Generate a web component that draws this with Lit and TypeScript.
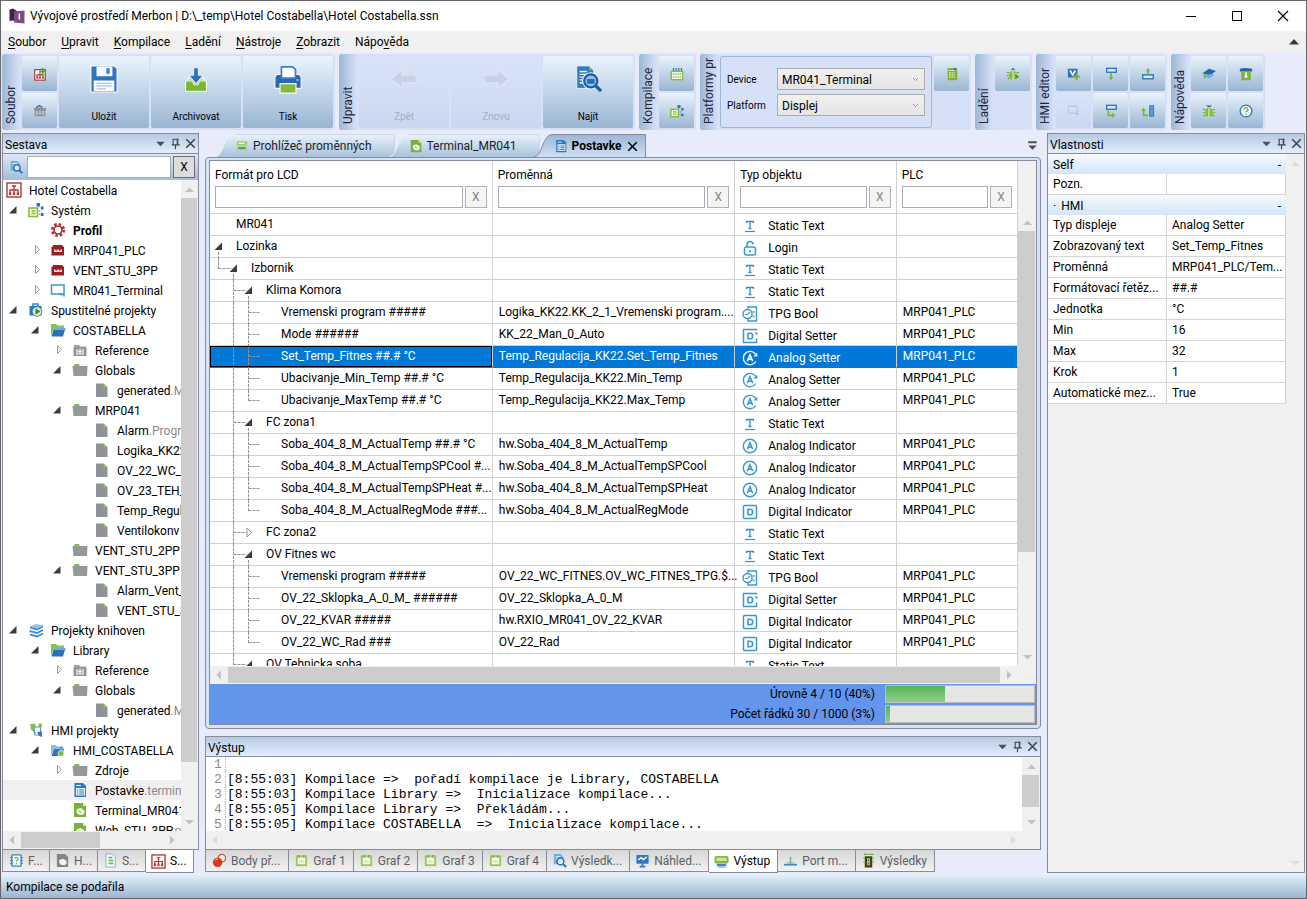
import { LitElement, html, css, svg, nothing } from "lit";
import type { TemplateResult } from "lit";
import { customElement, state } from "lit/decorators.js";
import { classMap } from "lit/directives/class-map.js";

const SHAPES: Record<string, TemplateResult> = {
  logo: svg`<path d="M0.500 1.500 4 0.500 8 3 8 14 4 12.500 0.500 13z" fill="#4b1d49"/><path d="M5 3.500 15.500 2.500V15.500L5 14.500z" fill="#7d4a83"/><path d="M9.500 5.500h1.600v6h-1.600z" fill="#fff"/>`,
  project: svg`<rect x="1" y="1" width="14" height="14" fill="#fff" stroke="#b3332f" stroke-width="1.400"/><path d="M8 4v4M4 11V8h8v3M8 8v3M6 4h4" fill="none" stroke="#b3332f" stroke-width="1.300"/><path d="M3 10.500h2.200V13H3zM6.900 10.500h2.200V13H6.900zM10.800 10.500H13V13h-2.200z" fill="#b3332f"/>`,
  projectNew: svg`<rect x="2" y="3" width="12" height="12" fill="#fff" stroke="#b3332f" stroke-width="1.300"/><path d="M4.500 12V9h7v3M8 9v3M8 9V6" fill="none" stroke="#b3332f" stroke-width="1.300"/><path d="M4 11h2v2.300H4zM7 11h2v2.300H7zM10.300 11h2v2.300h-2z" fill="#b3332f"/><path d="M11 1v8M7 5h8" stroke="#4ba52e" stroke-width="2"/>`,
  basket: svg`<path d="M3.500 4.500 7 2l4 2" fill="none" stroke="#3b87c8" stroke-width="2"/><path d="M1 4.500h14v3h-1V14H2V7.500H1z" fill="#8f9399"/><path d="M4.500 8v4M8 8v4M11.500 8v4" stroke="#e4ebf2" stroke-width="1.200"/>`,
  save: svg`<path d="M3 2h24l3 3v25H2V3z" fill="#2f74bd" stroke="#f4f8fc" stroke-width="1.300"/><path d="M8 2.600h17V13H8z" fill="#f7fafd"/><path d="M18.500 4.500h3.600v6h-3.600z" fill="#3b80c5"/><path d="M5 17.500h22v11.500H5z" fill="#fafcfe"/><path d="M8 20.500h16M8 23.500h16M8 26.500h10" stroke="#9aaec2" stroke-width="1"/>`,
  archive: svg`<path d="M5 19 9 14h14l4 5v10H5z" fill="#c9e1ae" stroke="#f4faee" stroke-width="1.400"/><path d="M5.500 19h6l2 4h5l2-4h6v9.500h-21z" fill="#7ab535"/><path d="M13.500 4h5v8h5L16 21 8.500 12h5z" fill="#2f72bb" stroke="#eef6fc" stroke-width="1"/>`,
  print: svg`<path d="M4 11h24l2 3v12H2V14z" fill="#2a67b1" stroke="#f0f6fb" stroke-width="1.300"/><path d="M9 3h12l3 3v9H9z" fill="#fff" stroke="#3b81c4" stroke-width="1.800"/><path d="M7.500 21h17v10h-17z" fill="#86b93c" stroke="#f2f8ec" stroke-width="1.300"/><path d="M25 17h2" stroke="#cfe2f2" stroke-width="1.500"/>`,
  undo: svg`<path d="M2 16 14 6v5.500h15v9H14V26z" fill="#c8d1e6" stroke="#dfe6f5" stroke-width="1.300"/>`,
  redo: svg`<path d="M30 16 18 6v5.500H3v9h15V26z" fill="#c8d1e6" stroke="#dfe6f5" stroke-width="1.300"/>`,
  find: svg`<path d="M4 2h13l5 5v19H4z" fill="#2f7bc0" stroke="#eaf4fb" stroke-width="1"/><path d="M17 2l5 5h-5z" fill="#7db936"/><path d="M7 8h8M7 11h11M7 14h6M7 17h5M7 20h5" stroke="#e7f2fa" stroke-width="1.400"/><circle cx="19" cy="18" r="7" fill="#a9d3ee" stroke="#eaf4fb" stroke-width="4.500"/><circle cx="19" cy="18" r="7" fill="#8fc4e6" stroke="#1f5ca8" stroke-width="2.500"/><path d="M24 23l6 6" stroke="#1f5ca8" stroke-width="3.500"/><path d="M15 16h8v5h-8z" fill="#2b6cb3"/>`,
  findSmall: svg`<path d="M2 1h7l3 3v8H2z" fill="#6fb0de"/><path d="M4 4h5M4 6.500h3" stroke="#fff"/><circle cx="9" cy="9" r="3.600" fill="#d7ebf8" stroke="#2b72b8" stroke-width="1.600"/><path d="M12 12l3 3" stroke="#2b72b8" stroke-width="2.200"/>`,
  calendar: svg`<path d="M4 1v4M7 1v4M10 1v4M13 1v4" stroke="#2b6db5" stroke-width="1.300"/><rect x="1.500" y="5" width="13" height="9.500" fill="#f5fbe9" stroke="#8abb35" stroke-width="1.500"/><path d="M3.500 8h9M3.500 11.500h9" stroke="#8abb35" stroke-width="1.700" stroke-dasharray="1.500 1"/>`,
  system: svg`<rect x="1" y="6" width="8.500" height="8.500" fill="#f3fae5" stroke="#86b832" stroke-width="1.500"/><path d="M3.500 9h4M3.500 11.500h4" stroke="#86b832" stroke-width="1.300"/><path d="M9.500 6.500l2-2M11 9h2.500M11 12l2.500.5" stroke="#2d74bb" stroke-width="1" stroke-dasharray="1 1"/><path d="M8.500 1h3.500v3.500H8.500zM12.800 4.500h2.700v3h-2.700zM12.800 11h2.700v3h-2.700z" fill="#2d74bb"/>`,
  device: svg`<path d="M3 1h9l2 2v12H3z" fill="#7fb431"/><path d="M4.500 4h7M4.500 6.500h7M4.500 9h7M4.500 11.500h7" stroke="#eef6dd" stroke-width="1.200" stroke-dasharray="2 1"/><path d="M10 1h3v2.500h-3z" fill="#2d74bb"/>`,
  bug: svg`<path d="M1 6l3 1M15 6l-3 1M1 10h3M15 10h-3M2 14l3-2M14 14l-3-2" stroke="#6faa2d" stroke-width="1.400"/><ellipse cx="8" cy="9.500" rx="4.200" ry="5.500" fill="#84bb34"/><path d="M8 4v11" stroke="#e6f4ce" stroke-width="1.200"/><path d="M6 3.500a2 2 0 0 1 4 0z" fill="#2b6db5"/><path d="M5.500 1l1.500 2M10.500 1 9 3" stroke="#2b6db5"/>`,
  bugRun: svg`<path d="M1 6l3 1M15 6l-3 1M1 10h3M2 14l3-2" stroke="#6faa2d" stroke-width="1.400"/><ellipse cx="8" cy="9.500" rx="4.200" ry="5.500" fill="#84bb34"/><path d="M8 4v11" stroke="#e6f4ce" stroke-width="1.200"/><path d="M10 7l6 4-6 4z" fill="#4b9a24" stroke="#e6f4ce" stroke-width="0.600"/><path d="M6 3.500a2 2 0 0 1 4 0z" fill="#2b6db5"/>`,
  vNew: svg`<path d="M1 2h11v10H1z" fill="#2b72b9"/><path d="M3.500 4l3 5 3-5" fill="none" stroke="#fff" stroke-width="1.800"/><path d="M11 7v8M7 11h8" stroke="#7fb431" stroke-width="2.200"/>`,
  dockDown: svg`<rect x="3" y="1.500" width="11" height="4.500" fill="#d9e9f6" stroke="#2b72b9" stroke-width="1.500"/><path d="M8 7v7" stroke="#7fb431" stroke-width="2"/><path d="M5.500 11h5L8 15z" fill="#7fb431"/>`,
  dockUp: svg`<rect x="2" y="9" width="12" height="4.500" fill="#d9e9f6" stroke="#2b72b9" stroke-width="1.500"/><path d="M8 8V2" stroke="#7fb431" stroke-width="2"/><path d="M5.500 5h5L8 1z" fill="#7fb431"/>`,
  addGhost: svg`<rect x="1.500" y="2.500" width="10" height="8" rx="1" fill="none" stroke="#bac6de" stroke-width="1.300"/><path d="M11.500 8v6M8.500 11h6" stroke="#bac6de" stroke-width="1.600"/>`,
  dockStep: svg`<rect x="3" y="1.500" width="11" height="4.500" fill="#d9e9f6" stroke="#2b72b9" stroke-width="1.500"/><path d="M5 7v6h4" fill="none" stroke="#7fb431" stroke-width="1.800"/><path d="M9 9.500l4 3.500-4 3z" fill="#7fb431"/>`,
  dockSide: svg`<path d="M3 6v7h5" fill="none" stroke="#7fb431" stroke-width="1.800"/><path d="M0.500 8h5L3 4z" fill="#7fb431"/><rect x="10" y="2" width="4.500" height="12" fill="#5e9bd0" stroke="#2b72b9"/>`,
  graduate: svg`<path d="M0.500 7 8 2l8 2.500-7 5z" fill="#2563ab"/><path d="M4 8.500v3l4 1.500 5-3V8" fill="#77a9d8"/><path d="M3 8v5" stroke="#7fb431" stroke-width="2"/>`,
  helpBox: svg`<path d="M1 2l6-1 8 1v3H1z" fill="#2563ab"/><path d="M2.500 5h11v10h-11z" fill="#7fb431"/><path d="M8 6v5" stroke="#fff" stroke-width="2"/><path d="M5.500 10h5L8 13.500z" fill="#fff"/>`,
  question: svg`<circle cx="8" cy="8" r="6.700" fill="#f4faff" stroke="#2f7bc0" stroke-width="1.500"/><path d="M5.800 6.300a2.200 2.200 0 1 1 3 2.100q-.8.400-.8 1.400M8 11.200v1.500" fill="none" stroke="#7fb431" stroke-width="1.700"/>`,
  gear: svg`<circle cx="8" cy="8" r="5.800" fill="none" stroke="#a8322c" stroke-width="2.600" stroke-dasharray="2.500 2.050"/><circle cx="8" cy="8" r="4" fill="#fff" stroke="#a8322c" stroke-width="1.700"/>`,
  plc: svg`<path d="M1.500 4.500h1.500V3h9.500v1.500H14v9H1.500z" fill="#9a1f25"/><path d="M4 7.500h8v2.500H4z" fill="#f6dfe0"/><path d="M5.500 6.500h1.500v2H5.500zM9 6.500h1.500v2H9z" fill="#9a1f25"/>`,
  screen: svg`<rect x="1.500" y="3" width="12.500" height="9" fill="#fff" stroke="#3f96d2" stroke-width="1.500"/><path d="M9 12.500h5v2" fill="none" stroke="#3f96d2" stroke-width="1.500"/>`,
  bag: svg`<path d="M5 4V2h5v2" fill="none" stroke="#3c88ca" stroke-width="1.600"/><path d="M1.500 4h12v9.500h-12z" fill="#2d77be"/><circle cx="9" cy="9.500" r="4.800" fill="#d9e8c6" stroke="#2d77be" stroke-width="0.800"/><path d="M7.500 6.500l5 3-5 3z" fill="#3f7f3a"/>`,
  folderOpen: svg`<path d="M1 14V2h5l1.500 1.500H14V6H4z" fill="#8cc252"/><path d="M4 6h11.500L13 14.500H1.500z" fill="#2b6fba"/><path d="M4 6h11.500l-.5 2H3.500z" fill="#6dadde"/>`,
  folderRef: svg`<path d="M2 3h5l1 1.500h6V6H2z" fill="#9ea2a8"/><path d="M1.500 5.500h13V14h-13z" fill="#8e9298"/><path d="M5 7v5h6V7M8 6.500v4M6.500 9 8 10.500 9.500 9" fill="none" stroke="#fff" stroke-width="1.200"/>`,
  folder: svg`<path d="M2 4.500V3l1-1h4l1 1.500z" fill="#82bb3d"/><path d="M0.500 4h15L15 14H1.500z" fill="#94979b"/>`,
  file: svg`<path d="M2 1.500h7.500l4 4V15H2z" fill="#8f9397"/><path d="M9.500 1.500l4 4h-4z" fill="#8cc63f"/>`,
  books: svg`<path d="M2 4.500 8 2l7 1.500-6 3z" fill="#8cc4ea"/><path d="M2 4.500v2l7 2 6-3v-2l-6 3z" fill="#3f8fd0"/><path d="M1.500 8v2l7.500 2 6-3V7l-6 3z" fill="#3f8fd0"/><path d="M2 11.500v2l7 2 6-3v-2l-6 3z" fill="#3f8fd0"/>`,
  hmi: svg`<path d="M2 2l5-.5L8 5l-1 6-4-3z" fill="#8fc44c"/><path d="M6 5h6.500v8H7z" fill="#fff" stroke="#4d93cf" stroke-width="1.200"/><path d="M10.500 1.500H14V5h-3.500z" fill="#8fc44c"/><path d="M9 10l5-.5V15l-3-1z" fill="#2f7bc0"/>`,
  hmiFolder: svg`<path d="M1 13V3h5l1 1.500h6V7H4z" fill="#8abfe6"/><path d="M4 7h10l-2 7H1.500z" fill="#2d77be"/><circle cx="11.500" cy="6.500" r="2" fill="#5ba6de"/><circle cx="11" cy="11.500" r="3" fill="#82bb3d" stroke="#fff" stroke-width="0.700"/>`,
  terminalDoc: svg`<path d="M2.500 1h8.500l3 3v11H2.500z" fill="#2b79c0"/><path d="M4 6h9v7.500H4z" fill="#eaf4fb"/><path d="M5 8h1.300M5 10h1.300M5 12h1.300M7.300 8H12M7.300 10H12M7.300 12H12" stroke="#2b79c0" stroke-width="1.100"/><path d="M4 3.500h5" stroke="#cfe5f5" stroke-width="1.200"/>`,
  greenDoc: svg`<path d="M2 1h9l3 3v11H2z" fill="#7ab03a"/><path d="M11 1l3 3h-3z" fill="#d7ecbd"/><path d="M4.500 7.500l4-1.500 3.500 2 .5 3-2 2-4.500-.5-1.500-2.500z" fill="#f3f9ea"/><path d="M6.500 8.500l3 2.500" stroke="#7ab03a"/>`,
  grayDoc: svg`<path d="M2 1h9l3 3v11H2z" fill="#808488"/><path d="M11 1l3 3h-3z" fill="#8cc63f"/><path d="M4.500 7.500l4-1.500 3.500 2 .5 3-2 2-4.500-.5-1.500-2.500z" fill="#f3f4f5"/>`,
  blueDoc: svg`<path d="M3 1h7l3 3v11H3z" fill="#f4f9fd" stroke="#7fb2d9"/><path d="M6 5h4M6 8h5M6 11h5" stroke="#7cb342" stroke-width="1.800"/>`,
  functionDoc: svg`<rect x="3" y="2" width="10" height="12" rx="1" fill="#f7fbfe" stroke="#3a87c6" stroke-width="1.500"/><path d="M1 5h3M1 8h3M1 11h3M12 5h3M12 8h3M12 11h3" stroke="#3a87c6"/><path d="M6.500 6a1.500 1.500 0 1 1 2 1.500q-.5.300-.5 1.500M8 10.500V12" fill="none" stroke="#7cb342" stroke-width="1.400"/>`,
  variables: svg`<rect x="2" y="2.500" width="12" height="5" rx="1" fill="#9ccc65"/><rect x="2" y="8" width="12" height="5.500" rx="1" fill="#b5d67f"/><path d="M4 5h7" stroke="#f1f8e8" stroke-width="1.500"/><path d="M4 9.500h8v2H4z" fill="#3c86c8"/>`,
  breakpoint: svg`<circle cx="10.500" cy="5.500" r="4" fill="#f7e9e6" stroke="#c05a42" stroke-width="1.300"/><circle cx="6" cy="10" r="5" fill="#d93a1c"/><path d="M3.500 8a3 3 0 0 1 3-1.500" fill="none" stroke="#f7b0a0" stroke-width="1.200"/>`,
  chart: svg`<rect x="3" y="3.500" width="10" height="9.500" fill="#f4fae6" stroke="#9bc75a" stroke-width="2"/><path d="M5.500 2v3M10.500 2v3" stroke="#6f9e2e" stroke-width="1.200"/><path d="M5.500 9h5" stroke="#c9e29c" stroke-width="1.500"/>`,
  preview: svg`<rect x="1.500" y="2" width="13" height="9.500" rx="1" fill="#2f78bf"/><path d="M3.500 7.500l3-2.500 2.500 2 3.500-3" stroke="#fff" stroke-width="1.400" fill="none"/><path d="M5 14.500h6M8 11v3" stroke="#2f78bf" stroke-width="1.700"/>`,
  output: svg`<rect x="0.500" y="2" width="15" height="8" rx="2" fill="#83b93f"/><path d="M2.500 4h11v3.500h-11z" fill="#c9e5a3"/><path d="M3 10.500h10v2.500H3z" fill="#3b87c8"/><path d="M4 14h8" stroke="#9bb3c7" stroke-width="1.500"/>`,
  port: svg`<path d="M1 12.500h14" stroke="#3b87c8" stroke-width="1.800"/><path d="M8 4v8" stroke="#7cb342" stroke-width="1.600"/><path d="M4 10.500h8" stroke="#7fb2d9" stroke-width="1.200"/>`,
  traffic: svg`<path d="M3 1.500h3M7 1.500h2M10 1.500h3" stroke="#5c9a32" stroke-width="1.300"/><rect x="4" y="3.500" width="8" height="12" fill="#3f422c"/><path d="M6.500 5.500h3V13h-3z" fill="#e6c84a"/><path d="M7.500 7h1v1.500h-1zM7.500 10.500h1V12h-1z" fill="#3f422c"/><path d="M2 5.500h2M2 9.500h2M12 5.500h2M12 9.500h2" stroke="#8cb04a"/>`,
  text: svg`<path d="M4.500 3.500h7M8 3.500V11M4.500 3v2M11.500 3v2M6.500 10.500h3" stroke="#2f8fcb" stroke-width="1.300" fill="none"/><path d="M3 13.500h10" stroke="#2f8fcb" stroke-width="1.200"/>`,
  lock: svg`<rect x="2.500" y="7" width="11" height="8" rx="2" fill="none" stroke="#3b97d0" stroke-width="1.500"/><path d="M5 7V4.500a3 3 0 0 1 6 0" fill="none" stroke="#3b97d0" stroke-width="1.500"/><path d="M7 10.200h2v2H7z" fill="#3b97d0"/>`,
  tpg: svg`<path d="M6 3.500V1h8.500v14H6v-2.500" fill="none" stroke="#3b97d0" stroke-width="1.400"/><circle cx="5.500" cy="8" r="4.500" fill="none" stroke="#3b97d0" stroke-width="1.400"/><path d="M3 8.500h2.500L8 6" fill="none" stroke="#3b97d0" stroke-width="1.200"/><path d="M11.500 5v1.700M11.500 9.500v1.700" stroke="#3b97d0" stroke-width="1.800"/>`,
  dSet: svg`<path d="M14.500 10.500v4h-13v-13h13v1" fill="none" stroke="#3b97d0" stroke-width="1.500"/><path d="M12.500 4.500h3v3z" fill="#3b97d0"/><path d="M6 5.300h2a2.700 2.700 0 0 1 0 5.400H6z" fill="none" stroke="#3b97d0" stroke-width="1.600"/>`,
  dInd: svg`<rect x="1.500" y="1.500" width="13" height="13" rx="1" fill="none" stroke="#3b97d0" stroke-width="1.500"/><path d="M6 5.300h2a2.700 2.700 0 0 1 0 5.400H6z" fill="none" stroke="#3b97d0" stroke-width="1.600"/>`,
  aSet: svg`<path d="M13.800 11.500A6.700 6.700 0 1 1 13.600 4.300" fill="none" stroke="currentColor" stroke-width="1.400"/><path d="M11.500 6.500h4l-.5-3.800z" fill="currentColor"/><path d="M5.300 11.200 8 4.800l2.700 6.400M6.300 9.300h3.500" fill="none" stroke="currentColor" stroke-width="1.600"/>`,
  aInd: svg`<circle cx="8" cy="8" r="6.700" fill="none" stroke="#3b97d0" stroke-width="1.400"/><path d="M5.300 11.200 8 4.800l2.700 6.400M6.300 9.300h3.500" fill="none" stroke="#3b97d0" stroke-width="1.600"/>`,
  min: svg`<path d="M3 8.500h10" stroke="#000"/>`,
  max: svg`<rect x="3.500" y="3.500" width="9" height="9" fill="none" stroke="#000"/>`,
  close: svg`<path d="M3 3l10 10M13 3 3 13" stroke="currentColor" stroke-width="1.200"/>`,
  cross: svg`<path d="M3.500 3.500l9 9M12.500 3.500l-9 9" stroke="currentColor" stroke-width="1.700"/>`,
  pin: svg`<path d="M5.500 3v6M5 3.500h6M10 3v6M4 9.500h8.500M8 10v4" fill="none" stroke="#3f444c" stroke-width="1.200"/><path d="M9.500 3h1.500v6H9.500z" fill="#3f444c"/>`,
  drop: svg`<path d="M3.500 6h9L8 11z" fill="#4a4f58"/>`,
  overflow: svg`<path d="M3.500 3.500h9v2h-9zM3.500 8h9L8 12.500z" fill="#4a4f58"/>`,
  collapse: svg`<path d="M3 10.500h10L8 5z" fill="#3c3c3c"/>`,
  open: svg`<path d="M11.500 4V11.500H4z" fill="#3c3c3c"/>`,
  shut: svg`<path d="M8.500 3.500 12.500 7.500l-4 4z" fill="#fff" stroke="#9a9a9a"/>`,
};

const icon = (name: string, size = 16) =>
  html`<svg class="ic" viewBox=${size > 20 ? "0 0 32 32" : "0 0 16 16"} width=${size} height=${size} aria-hidden="true">${SHAPES[name]}</svg>`;

type Node = { level: number; icon: string; label: string; ext?: string; open?: boolean; bold?: boolean; marked?: boolean };
const n = (level: number, ic: string, label: string, open?: boolean, ext?: string): Node => ({ level, icon: ic, label, open, ext });

const NODES: Node[] = [
  n(0, "project", "Hotel Costabella"),
  n(1, "system", "Systém", true),
  { ...n(2, "gear", "Profil"), bold: true },
  n(2, "plc", "MRP041_PLC", false),
  n(2, "plc", "VENT_STU_3PP", false),
  n(2, "screen", "MR041_Terminal", false),
  n(1, "bag", "Spustitelné projekty", true),
  n(2, "folderOpen", "COSTABELLA", true),
  n(3, "folderRef", "Reference", false),
  n(3, "folder", "Globals", true),
  n(4, "file", "generated", undefined, ".M"),
  n(3, "folder", "MRP041", true),
  n(4, "file", "Alarm", undefined, ".Progr"),
  n(4, "file", "Logika_KK22"),
  n(4, "file", "OV_22_WC_"),
  n(4, "file", "OV_23_TEH_"),
  n(4, "file", "Temp_Regul"),
  n(4, "file", "Ventilokonv"),
  n(3, "folder", "VENT_STU_2PP"),
  n(3, "folder", "VENT_STU_3PP", true),
  n(4, "file", "Alarm_Vent_"),
  n(4, "file", "VENT_STU_3"),
  n(1, "books", "Projekty knihoven", true),
  n(2, "folderOpen", "Library", true),
  n(3, "folderRef", "Reference", false),
  n(3, "folder", "Globals", true),
  n(4, "file", "generated", undefined, ".M"),
  n(1, "hmi", "HMI projekty", true),
  n(2, "hmiFolder", "HMI_COSTABELLA", true),
  n(3, "folder", "Zdroje", false),
  { ...n(3, "terminalDoc", "Postavke", undefined, ".termina"), marked: true },
  n(3, "greenDoc", "Terminal_MR041"),
  n(3, "greenDoc", "Web_STU_3PP", undefined, ".p"),
];

/* guides: one letter per ancestor column; "." blank, "|" line, "t" tee, "l" elbow */
type Row = { guides: string; label: string; open?: boolean; variable: string; icon: string; type: string; plc: string };
const KIND: Record<string, [string, string]> = {
  T: ["text", "Static Text"], L: ["lock", "Login"], B: ["tpg", "TPG Bool"], DS: ["dSet", "Digital Setter"],
  AS: ["aSet", "Analog Setter"], AI: ["aInd", "Analog Indicator"], DI: ["dInd", "Digital Indicator"],
};
const r = (guides: string, label: string, kind: string, variable = "", open?: boolean): Row => ({
  guides, label, open, variable, icon: KIND[kind][0], type: KIND[kind][1], plc: variable ? "MRP041_PLC" : "",
});
const ROWS: Row[] = [
  r("", "MR041", "T"),
  r("", "Lozinka", "L", "", true),
  r("l", "Izbornik", "T", "", true),
  r(".t", "Klima Komora", "T", "", true),
  r(".|t", "Vremenski program #####", "B", "Logika_KK22.KK_2_1_Vremenski program...."),
  r(".|t", "Mode ######", "DS", "KK_22_Man_0_Auto"),
  r(".|t", "Set_Temp_Fitnes ##.# °C", "AS", "Temp_Regulacija_KK22.Set_Temp_Fitnes"),
  r(".|t", "Ubacivanje_Min_Temp ##.# °C", "AS", "Temp_Regulacija_KK22.Min_Temp"),
  r(".|l", "Ubacivanje_MaxTemp ##.# °C", "AS", "Temp_Regulacija_KK22.Max_Temp"),
  r(".t", "FC zona1", "T", "", true),
  r(".|t", "Soba_404_8_M_ActualTemp ##.# °C", "AI", "hw.Soba_404_8_M_ActualTemp"),
  r(".|t", "Soba_404_8_M_ActualTempSPCool #...", "AI", "hw.Soba_404_8_M_ActualTempSPCool"),
  r(".|t", "Soba_404_8_M_ActualTempSPHeat #...", "AI", "hw.Soba_404_8_M_ActualTempSPHeat"),
  r(".|l", "Soba_404_8_M_ActualRegMode ###...", "DI", "hw.Soba_404_8_M_ActualRegMode"),
  r(".t", "FC zona2", "T", "", false),
  r(".t", "OV Fitnes wc", "T", "", true),
  r(".|t", "Vremenski program #####", "B", "OV_22_WC_FITNES.OV_WC_FITNES_TPG.$..."),
  r(".|t", "OV_22_Sklopka_A_0_M_ ######", "DS", "OV_22_Sklopka_A_0_M"),
  r(".|t", "OV_22_KVAR #####", "DI", "hw.RXIO_MR041_OV_22_KVAR"),
  r(".|l", "OV_22_WC_Rad ###", "DI", "OV_22_Rad"),
  r(".l", "OV Tehnicka soba", "T", "", true),
];

const PROPS: [string, string][] = [
  ["Typ displeje", "Analog Setter"],
  ["Zobrazovaný text", "Set_Temp_Fitnes"],
  ["Proměnná", "MRP041_PLC/Tem..."],
  ["Formátovací řetěz...", "##.#"],
  ["Jednotka", "°C"],
  ["Min", "16"],
  ["Max", "32"],
  ["Krok", "1"],
  ["Automatické mez...", "True"],
];

const LOG = [
  "",
  "[8:55:03] Kompilace =>  pořadí kompilace je Library, COSTABELLA",
  "[8:55:03] Kompilace Library =>  Inicializace kompilace...",
  "[8:55:05] Kompilace Library =>  Překládám...",
  "[8:55:05] Kompilace COSTABELLA  =>  Inicializace kompilace...",
];

const MENU = ["_Soubor", "_Upravit", "_Kompilace", "_Ladění", "_Nástroje", "_Zobrazit", "Nápo_věda"];
const OUT_TABS: [string, string][] = [
  ["breakpoint", "Body př..."], ["chart", "Graf 1"], ["chart", "Graf 2"], ["chart", "Graf 3"], ["chart", "Graf 4"],
  ["findSmall", "Výsledk..."], ["preview", "Náhled..."], ["output", "Výstup"], ["port", "Port m..."], ["traffic", "Výsledky"],
];
const SIDE_TABS: [string, string][] = [["functionDoc", "F..."], ["grayDoc", "H..."], ["blueDoc", "S..."], ["project", "S..."]];

@customElement("app-root")
export class AppRoot extends LitElement {
  @state() private selected = 6;

  static styles = css`
    :host {
      display: flex;
      flex-direction: column;
      box-sizing: border-box;
      height: 100vh;
      border: 1px solid #66666a;
      background: #e8ebfa;
      color: #000;
      font: 12px/16px Roboto, "Open Sans", sans-serif;
      overflow: hidden;
    }
    * { box-sizing: border-box; }
    button, input, select { font: inherit; color: inherit; margin: 0; padding: 0; border: 0; border-radius: 0; background: none; }
    .ic { display: block; flex: none; }

    .title { display: flex; align-items: center; height: 30px; flex: none; background: #fff; padding-left: 8px; gap: 5px; }
    .title h1 { flex: 1; margin: 0; font: inherit; }
    .title .win { display: flex; }
    .title button { width: 46px; height: 30px; display: flex; align-items: center; justify-content: center; }
    .menu { display: flex; align-items: center; height: 21px; flex: none; background: #f0f0f0; padding: 0 4px 0 7px; gap: 15px; }
    .menu a { color: inherit; text-decoration: none; }
    .menu u { text-underline-offset: 2px; }
    .menu button { margin-left: auto; }

    .tools { display: flex; flex: none; gap: 4px; padding: 2px 1px 3px; }
    .group { display: flex; background: #d6e1f7; border-radius: 3px; height: 76px; padding: 2px 2px 2px 0; gap: 2px; overflow: hidden; }
    .group h2 {
      width: 18px; margin: -2px 0; padding: 6px 0 0; font: inherit; line-height: 18px; text-align: start; white-space: nowrap;
      writing-mode: vertical-rl; transform: rotate(180deg); overflow: hidden; color: #1c2540;
      background: linear-gradient(to left, #9db7d5, #d6e1f7);
    }
    .pads { display: grid; grid-template-rows: 35px 35px; grid-auto-flow: column; gap: 2px; }
    .pads button, .big {
      display: flex; align-items: center; justify-content: center; width: 35px; border-radius: 2px;
      background: linear-gradient(#eaf4fc, #9ab5d3);
    }
    .big { flex-direction: column; width: 90px; height: 72px; font-size: 10px; line-height: 12px; justify-content: flex-start; padding-top: 8px; gap: 17px; }
    .pads button:disabled, .big:disabled { background: linear-gradient(#d9e4f8, #c9d7ef); color: #a4aec4; }
    .platform { display: grid; grid-template-columns: 50px 148px; grid-auto-rows: 22px; gap: 4px 0; align-content: center; padding: 0 6px; width: 212px; border: 1px solid #9db7d5; border-radius: 3px; }
    .platform label { font-size: 10px; line-height: 24px; }
    .combo { display: flex; align-items: center; border: 1px solid #acacac; background: linear-gradient(#f0f0f0, #e5e5e5); padding-right: 4px; }
    .combo select { appearance: none; flex: 1; height: 20px; padding: 1px 4px 0; }

    .main { display: flex; flex: 1; min-height: 0; gap: 6px; padding: 0 1px; }
    .dock { display: flex; flex-direction: column; min-height: 0; }
    .frame { display: flex; flex-direction: column; min-height: 0; border: 1px solid #868c9c; background: #fff; }
    .head { display: flex; align-items: center; height: 20px; flex: none; padding: 0 0 0 2px; border-bottom: 1px solid #868c9c; background: linear-gradient(#b6cae2, #e4edfc); }
    .head h2 { flex: 1; margin: 0; font: inherit; padding-top: 2px; }
    .head button { width: 15px; display: flex; justify-content: center; color: #3f444c; }

    .side { width: 197px; flex: none; }
    .side .frame { flex: 1; }
    .search { display: flex; align-items: center; gap: 2px; height: 26px; flex: none; padding: 0 3px 0 6px; background: linear-gradient(#dce8f7, #a3bcd9); }
    .search input { flex: 1; min-width: 0; height: 22px; border: 1px solid #abadb3; background: #fff; padding: 0 4px; }
    .search button { width: 22px; height: 22px; border: 1px solid #707070; background: #ddd; }
    .search .go { border: 0; background: none; width: 16px; display: flex; align-items: center; }
    .pair { display: grid; grid-template-columns: 1fr 17px; grid-template-rows: minmax(0, 1fr) 18px; flex: 1; min-height: 0; background: #f0f0f0; }
    .tree { margin: 0; padding: 0; list-style: none; background: #fff; overflow: hidden; min-width: 0; }
    .node { display: flex; align-items: center; height: 20px; white-space: nowrap; line-height: 20px; }
    .node .exp { width: 16px; flex: none; margin-right: 7px; }
    .node .lab { padding: 2px 0 0 7px; }
    .node.root { padding-left: 3px; }
    .node.l1 { padding-left: 2px; } .node.l2 { padding-left: 24px; } .node.l3 { padding-left: 46px; } .node.l4 { padding-left: 68px; }
    .node.bold { font-weight: 700; }
    .node.marked { background: #f0f0f0; }
    .node i { font-style: normal; color: #8a8a8a; }

    .vbar, .hbar { display: flex; background: #f0f0f0; color: #c2c2c2; }
    .vbar { flex-direction: column; }
    .vbar > svg, .hbar > svg { flex: none; display: block; margin: 0 auto; }
    .track { display: flex; flex: 1; }
    .vbar .track { flex-direction: column; margin: 0 1px 0 0; }
    .track b { background: #cdcdcd; }
    .hbar .track { margin: 1px 0; }
    .idle { color: #dcdcdc; }

    .tabs { display: flex; flex: none; height: 23px; align-items: flex-start; }
    .tabs button { display: flex; align-items: center; gap: 4px; height: 22px; padding: 0 7px 0 5px; white-space: nowrap; overflow: hidden; color: #5b5f66; border: 1px solid #868c9c; border-width: 0 1px 1px 0; background: linear-gradient(#d6d6d6, #f2f2f2); }
    .tabs button:first-child { border-left-width: 1px; padding: 0 8px 0 6px; }
    .tabs button.on { background: #fff; color: #000; height: 23px; }
    .side .tabs button { width: 48px; }

    .center { display: flex; flex-direction: column; flex: 1; min-width: 0; }
    .doctabs { display: flex; align-items: flex-end; height: 24px; flex: none; padding: 0 1px 0 10px; }
    .doctabs button { display: flex; align-items: center; height: 23px; color: #1b1f27; }
    .doctabs .curve { width: 20px; height: 23px; display: block; flex: none; }
    .doctabs .body { display: flex; align-items: center; gap: 4px; height: 23px; padding-right: 22px; border-top: 1px solid #d3d7de; border-right: 1px solid #d3d7de; border-top-right-radius: 3px; background: linear-gradient(#e6f1fb, #a9c1dc); }
    .doctabs button + button { margin-left: -6px; }
    .doctabs button.on { font-weight: 700; color: #000; }
    .doctabs .on .body { padding-right: 5px; border-color: #868c9c; border-radius: 0; background: linear-gradient(#9cb7d6, #cfe0f3); }
    .doctabs .more { margin-left: auto; }

    .doc { display: flex; flex: 1; min-height: 0; border: 1px solid #868c9c; border-radius: 4px; padding: 2px 3px 3px; background: #d3e4f8; }
    .sheet { display: flex; flex-direction: column; flex: 1; min-width: 0; border: 1px solid #868c9c; background: #fff; }
    .sheet .pair { grid-template-columns: 1fr 18px; }
    .sheet .vbar { padding-top: 52px; }
    .clip { overflow: hidden; background: #fff; min-width: 0; }
    table { border-collapse: separate; border-spacing: 0; table-layout: fixed; width: 100%; }
    .c1 { width: 35%; } .c2 { width: 30%; } .c3 { width: 20%; } .c4 { width: 15%; }
    th { text-align: left; font-weight: 400; height: 53px; padding: 6px 5px 4px; vertical-align: top; border: 1px solid #d0d0d0; border-width: 0 1px 1px 0; }
    .filter { display: flex; gap: 2px; margin-top: 3px; }
    .filter input { flex: 1; min-width: 0; height: 22px; border: 1px solid #abadb3; padding: 0 4px; }
    .filter button { width: 22px; height: 22px; border: 1px solid #adb2b5; background: #f4f4f4; color: #838383; }
    .grid td { height: 22px; padding: 0; border: 1px solid #d0d0d0; border-width: 0 1px 1px 0; white-space: nowrap; }
    .cell { display: flex; align-items: center; height: 21px; padding: 0 0 1px 6px; }
    .cell.first { padding: 0 0 0 1px; }
    .cell.first svg { margin-right: 5px; }
    .cell.first span { padding-bottom: 1px; }
    .cell.type { padding: 3px 0 0 7px; gap: 10px; color: #3b97d0; }
    .cell.type span { color: #000; }
    tr.sel td { background: #0078d7; color: #fff; border-bottom-color: #0078d7; }
    tr.sel .cell.type, tr.sel .cell.type span { color: #fff; }
    tr.sel .cell.first { outline: 1px solid #000; outline-offset: -1px; }
    .limits { display: grid; grid-template-columns: 1fr 150px; grid-auto-rows: 18px; gap: 2px 10px; padding: 1px 1px; flex: none; background: #6495ed; height: 40px; }
    .limits label { text-align: right; line-height: 19px; }
    progress { appearance: none; width: 150px; height: 18px; border: 1px solid #bcbcbc; }
    progress::-webkit-progress-bar { background: #e6e6e6; }
    progress::-webkit-progress-value { background: linear-gradient(#56b556, #8fce8f); }

    .out { flex: none; margin-top: 7px; }
    .out .pair { grid-template-columns: 1fr 18px; grid-template-rows: 74px 18px; flex: none; }
    .log { margin: 0; padding: 0 0 0 4px; list-style: none; background: #fff; font: 13px/15px "Liberation Mono", monospace; overflow: hidden; }
    .log li { display: flex; white-space: pre; height: 15px; }
    .log em { width: 16px; flex: none; margin-right: 1px; font-style: normal; padding-left: 4px; border-right: 1px dotted #b0b0b0; color: #8c8c8c; }

    .props { width: 258px; flex: none; }
    .props .frame { flex: 1; }
    .props .pair { grid-template-columns: 1fr 18px; grid-template-rows: minmax(0, 1fr); }
    .pg .cat { display: flex; align-items: center; gap: 5px; height: 20px; width: 100%; padding: 1px 5px 0 5px; background: linear-gradient(#f6faff, #d3e5f9); }
    .pg .cat span:last-child { margin-left: auto; }
    .pg td { height: 21px; padding: 0 0 0 5px; background: #fff; border: 1px solid #d5d5d5; border-width: 0 1px 1px 0; white-space: nowrap; overflow: hidden; }
    .status { flex: none; height: 25px; padding: 0 5px; line-height: 28px; background: linear-gradient(#e9f4fc, #9ab5d3); }
  `;

  private vbar(a: number, b: number, c: number) {
    return html`<div class=${classMap({ vbar: true, idle: !b })}>
      <svg width="17" height="18" viewBox="0 0 17 18"><path d="M4 12l4.500-4.500L13 12z" fill="currentColor" /></svg>
      <div class="track"><span style="flex:${a}"></span><b style="flex:${b}"></b><span style="flex:${c}"></span></div>
      <svg width="17" height="18" viewBox="0 0 17 18"><path d="M4 7l4.500 4.500L13 7z" fill="currentColor" /></svg>
    </div>`;
  }

  private hbar(a: number, b: number, c: number) {
    return html`<div class=${classMap({ hbar: true, idle: !b })}>
      <svg width="18" height="18" viewBox="0 0 18 18"><path d="M11 4.500 6.500 9l4.500 4.500z" fill="currentColor" /></svg>
      <div class="track"><span style="flex:${a}"></span><b style="flex:${b}"></b><span style="flex:${c}"></span></div>
      <svg width="18" height="18" viewBox="0 0 18 18"><path d="M7 4.500 11.500 9 7 13.500z" fill="currentColor" /></svg>
    </div>`;
  }

  private head(title: string) {
    return html`<div class="head">
      <h2>${title}</h2>
      <button aria-label="Nabídka">${icon("drop", 15)}</button>
      <button aria-label="Připnout">${icon("pin", 15)}</button>
      <button aria-label="Zavřít">${icon("cross", 15)}</button>
    </div>`;
  }

  private group(title: string, body: unknown) {
    return html`<section class="group"><h2>${title}</h2>${body}</section>`;
  }

  private pads(...names: string[]) {
    return html`<div class="pads">${names.map((k) => html`<button aria-label=${k} ?disabled=${k === "addGhost"}>${icon(k, 14)}</button>`)}</div>`;
  }

  private big(name: string, label: string, off = false) {
    return html`<button class="big" ?disabled=${off}>${icon(name, 30)}<span>${label}</span></button>`;
  }

  private toolbar() {
    return html`<div class="tools">
      ${this.group("Soubor", html`${this.pads("projectNew", "basket")}${this.big("save", "Uložit")}${this.big("archive", "Archivovat")}${this.big("print", "Tisk")}`)}
      ${this.group("Upravit", html`${this.big("undo", "Zpět", true)}${this.big("redo", "Znovu", true)}${this.big("find", "Najít")}`)}
      ${this.group("Kompilace", this.pads("calendar", "system"))}
      ${this.group("Platformy pr", html`<div class="platform">
          <label for="dev">Device</label>
          <div class="combo"><select id="dev"><option>MR041_Terminal</option></select>${this.chevron()}</div>
          <label for="plat">Platform</label>
          <div class="combo"><select id="plat"><option>Displej</option></select>${this.chevron()}</div>
        </div>${this.pads("device")}`)}
      ${this.group("Ladění", this.pads("bugRun"))}
      ${this.group("HMI editor", this.pads("vNew", "addGhost", "dockDown", "dockStep", "dockUp", "dockSide"))}
      ${this.group("Nápověda", this.pads("graduate", "bug", "helpBox", "question"))}
    </div>`;
  }

  private chevron() {
    return html`<svg width="9" height="9" viewBox="0 0 9 9"><path d="M2 3l2.500 2.500L7 3" fill="none" stroke="#9a9a9a" /></svg>`;
  }

  private node(d: Node) {
    const cls = { node: true, root: d.level === 0, [`l${d.level}`]: true, bold: !!d.bold, marked: !!d.marked };
    return html`<li class=${classMap(cls)}>
      ${d.level === 0 ? nothing : html`<span class="exp">${d.open === undefined ? nothing : icon(d.open ? "open" : "shut", 16)}</span>`}
      ${icon(d.icon, 16)}<span class="lab">${d.label}${d.ext ? html`<i>${d.ext}</i>` : nothing}</span>
    </li>`;
  }

  private guides(row: Row) {
    const depth = row.guides.length;
    const parts = [...row.guides].map((g, k) => {
      const x = 15 * k + 7.5;
      const arm = row.open === undefined ? 11 : 13;
      if (g === ".") return nothing;
      if (g === "|") return svg`<path d="M${x} 0V22" />`;
      return svg`<path d="M${x} 0V${g === "t" ? 22 : 11}M${x} 10.500h${arm}" />`;
    });
    const x = 15 * depth;
    return html`<svg class="ic" width=${x + 20} height="22" viewBox="0 0 ${x + 20} 22">
      <g fill="none" stroke="#8f9499" stroke-dasharray="3 1">${parts}${row.open ? svg`<path d="M${x + 7.5} 16V22" />` : nothing}</g>
      ${row.open === true ? svg`<path d="M${x + 11} 6.500v7.500h-7.500z" fill="#3c3c3c" />` : nothing}
      ${row.open === false ? svg`<path d="M${x + 6} 6l4.500 4.500-4.500 4.500z" fill="#fff" stroke="#9a9a9a" />` : nothing}
    </svg>`;
  }

  private docTab(name: string, label: string, on = false) {
    return html`<button class=${classMap({ on })}>
      <svg class="curve" viewBox="0 0 20 23">
        <defs><linearGradient id=${"fill-" + name} x2="0" y2="1"><stop stop-color=${on ? "#9cb7d6" : "#e6f1fb"} /><stop offset="1" stop-color=${on ? "#cfe0f3" : "#a9c1dc"} /></linearGradient></defs>
        <path d="M0 23C9 22 8 1 18 0.500H20V23z" fill="url(#${"fill-" + name})" />
        <path d="M0 23C9 22 8 1 18 0.500H20" fill="none" stroke=${on ? "#868c9c" : "#eef2f8"} />
      </svg>
      <span class="body">${icon(name, 14)}<span>${label}</span>${on ? icon("cross", 15) : nothing}</span>
    </button>`;
  }

  private sheet() {
    const cols = ["Formát pro LCD", "Proměnná", "Typ objektu", "PLC"];
    return html`<div class="doc"><div class="sheet">
      <div class="pair">
        <div class="clip"><table class="grid">
          <colgroup><col class="c1" /><col class="c2" /><col class="c3" /><col class="c4" /></colgroup>
          <thead><tr>${cols.map((c, i) => html`<th><label for="f${i}">${c}</label>
            <div class="filter"><input id="f${i}" /><button aria-label="Vymazat filtr">X</button></div></th>`)}</tr></thead>
          <tbody>${ROWS.map((row, i) => html`<tr class=${i === this.selected ? "sel" : ""} @click=${() => (this.selected = i)}>
            <td><div class="cell first">${this.guides(row)}<span>${row.label}</span></div></td>
            <td><div class="cell">${row.variable}</div></td>
            <td><div class="cell type">${icon(row.icon, 16)}<span>${row.type}</span></div></td>
            <td><div class="cell">${row.plc}</div></td>
          </tr>`)}</tbody>
        </table></div>
        ${this.vbar(0, 321, 96)}
        ${this.hbar(0, 1, 0)}
      </div>
      <div class="limits">
        <label for="lv">Úrovně 4 / 10 (40%)</label><progress id="lv" value="4" max="10"></progress>
        <label for="rw">Počet řádků 30 / 1000 (3%)</label><progress id="rw" value="30" max="1000"></progress>
      </div>
    </div></div>`;
  }

  render() {
    return html`
      <header class="title">
        ${icon("logo", 16)}
        <h1>Vývojové prostředí Merbon | D:\\_temp\\Hotel Costabella\\Hotel Costabella.ssn</h1>
        <div class="win"><button aria-label="Minimalizovat">${icon("min")}</button><button aria-label="Maximalizovat">${icon("max")}</button><button aria-label="Zavřít">${icon("close")}</button></div>
      </header>
      <nav class="menu">
        ${MENU.map((m) => {
          const i = m.indexOf("_");
          return html`<a href="#">${m.slice(0, i)}<u>${m[i + 1]}</u>${m.slice(i + 2)}</a>`;
        })}
        <button aria-label="Sbalit">${icon("collapse", 16)}</button>
      </nav>
      ${this.toolbar()}
      <main class="main">
        <aside class="dock side">
          <div class="frame">
            ${this.head("Sestava")}
            <div class="search"><button class="go" aria-label="Hledat">${icon("findSmall", 14)}</button><input aria-label="Hledat" /><button aria-label="Vymazat">X</button></div>
            <div class="pair"><ul class="tree">${NODES.map((d) => this.node(d))}</ul>${this.vbar(0, 564, 51)}${this.hbar(0, 79, 63)}</div>
          </div>
          <div class="tabs">${SIDE_TABS.map(([k, t], i) => html`<button class=${i === 3 ? "on" : ""}>${icon(k, 15)}${t}</button>`)}</div>
        </aside>
        <div class="center">
          <div class="doctabs">
            ${this.docTab("variables", "Prohlížeč proměnných")}${this.docTab("greenDoc", "Terminal_MR041")}${this.docTab("terminalDoc", "Postavke", true)}
            <button class="more" aria-label="Další">${icon("overflow", 15)}</button>
          </div>
          ${this.sheet()}
          <section class="dock out">
            <div class="frame">
              ${this.head("Výstup")}
              <div class="pair">
                <ol class="log">${LOG.map((l, i) => html`<li><em>${i + 1}</em>${l}</li>`)}</ol>
                ${this.vbar(0, 32, 6)}${this.hbar(1, 0, 0)}
              </div>
            </div>
            <div class="tabs">${OUT_TABS.map(([k, t], i) => html`<button class=${i === 7 ? "on" : ""}>${icon(k, 15)}${t}</button>`)}</div>
          </section>
        </div>
        <aside class="dock props">
          <div class="frame">
            ${this.head("Vlastnosti")}
            <div class="pair">
              <div class="pg">
                <button class="cat"><span>Self</span><span>-</span></button>
                <table><tr><td>Pozn.</td><td></td></tr></table>
                <button class="cat"><span>·</span><span>HMI</span><span>-</span></button>
                <table>${PROPS.map(([k, v]) => html`<tr><td>${k}</td><td>${v}</td></tr>`)}</table>
              </div>
              ${this.vbar(1, 0, 0)}
            </div>
          </div>
        </aside>
      </main>
      <footer class="status">Kompilace se podařila</footer>
    `;
  }
}
